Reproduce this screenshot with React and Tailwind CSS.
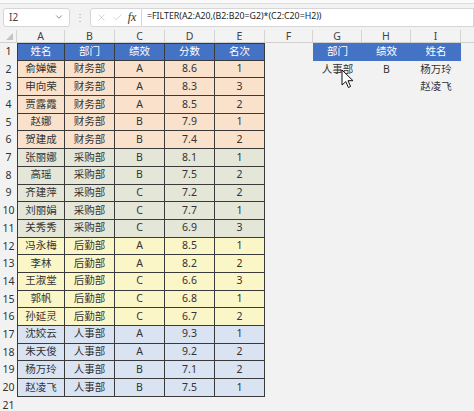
import { X, Check, ChevronDown } from "lucide-react";

const COLS = [
  { key: "A", w: "w-[48px]" },
  { key: "B", w: "w-[50px]" },
  { key: "C", w: "w-[50px]" },
  { key: "D", w: "w-[50px]" },
  { key: "E", w: "w-[50px]" },
  { key: "F", w: "w-[48px]" },
  { key: "G", w: "w-[49px]" },
  { key: "H", w: "w-[49px]" },
  { key: "I", w: "w-[50px]" },
];

const DEPT_BG = {
  财务部: "bg-[#f9e1cc]",
  采购部: "bg-[#e4e6d8]",
  后勤部: "bg-[#fbf6c7]",
  人事部: "bg-[#d9e3f2]",
};

const DATA = [
  ["俞婵媛", "财务部", "A", "8.6", "1"],
  ["申向荣", "财务部", "A", "8.3", "3"],
  ["贾露霞", "财务部", "A", "8.5", "2"],
  ["赵娜", "财务部", "B", "7.9", "1"],
  ["贺建成", "财务部", "B", "7.4", "2"],
  ["张丽娜", "采购部", "B", "8.1", "1"],
  ["高瑶", "采购部", "B", "7.5", "2"],
  ["齐建萍", "采购部", "C", "7.2", "2"],
  ["刘丽娟", "采购部", "C", "7.7", "1"],
  ["关秀秀", "采购部", "C", "6.9", "3"],
  ["冯永梅", "后勤部", "A", "8.5", "1"],
  ["李林", "后勤部", "A", "8.2", "2"],
  ["王淑堂", "后勤部", "C", "6.6", "3"],
  ["郭帆", "后勤部", "C", "6.8", "1"],
  ["孙延灵", "后勤部", "C", "6.7", "2"],
  ["沈姣云", "人事部", "A", "9.3", "1"],
  ["朱天俊", "人事部", "A", "9.2", "2"],
  ["杨万玲", "人事部", "B", "7.1", "2"],
  ["赵凌飞", "人事部", "B", "7.5", "1"],
];

const HEAD = ["姓名", "部门", "绩效", "分数", "名次"];
const SIDE = {
  1: ["部门", "绩效", "姓名"],
  2: ["人事部", "B", "杨万玲"],
  3: ["", "", "赵凌飞"],
};

function Cell({ w, className = "", children }) {
  return (
    <div className={`${w} shrink-0 h-full flex items-center justify-center ${className}`}>{children}</div>
  );
}

function Row({ n }) {
  const rec = n >= 2 && n <= 20 ? DATA[n - 2] : null;
  const side = SIDE[n];
  return (
    <div className="flex h-[17.7px]">
      <div className="w-[17px] shrink-0 flex items-end justify-center pb-[1px] text-[10.5px] text-[#333]">{n}</div>
      {COLS.slice(0, 5).map((c, i) => {
        if (n === 1) {
          return (
            <Cell
              key={c.key}
              w={c.w}
              className={`bg-[#4472c4] text-white border-r border-b border-t border-[#3a3a3a] ${i === 0 ? "border-l" : ""}`}
            >
              {HEAD[i]}
            </Cell>
          );
        }
        if (rec) {
          return (
            <Cell
              key={c.key}
              w={c.w}
              className={`${DEPT_BG[rec[1]]} text-[#333] border-r border-b border-[#3a3a3a] ${i === 0 ? "border-l" : ""}`}
            >
              {rec[i]}
            </Cell>
          );
        }
        return <Cell key={c.key} w={c.w} />;
      })}
      <Cell w={COLS[5].w} />
      {COLS.slice(6).map((c, i) => (
        <Cell
          key={c.key}
          w={c.w}
          className={n === 1 ? "bg-[#4472c4] text-white" : "text-[#333]"}
        >
          {side ? side[i] : ""}
        </Cell>
      ))}
    </div>
  );
}

export default function App() {
  const rows = Array.from({ length: 21 }, (_, i) => i + 1);
  return (
    <div
      className="w-[474px] h-[411px] overflow-hidden bg-[#f2f2f2] relative text-[10.5px]"
      style={{ fontFamily: '"Noto Sans", "Noto Sans CJK SC", sans-serif' }}
    >
      {/* formula bar */}
      <div className="h-[4px] bg-[#fafafa] border-b border-[#dedede]" />
      <div className="h-[26px] flex items-center pl-[3px] gap-[5px]">
        <div className="w-[67px] h-[19px] bg-white border border-[#d6d6d6] rounded-[3px] flex items-center justify-between px-[5px] text-[#444]">
          <span className="text-[10px]">I2</span>
          <ChevronDown size={10} strokeWidth={1.6} className="text-[#555]" />
        </div>
        <div className="text-[#aaa] text-[10px] leading-none">⋮</div>
        <div className="flex items-stretch h-[19px] flex-1">
          <div className="w-[52px] bg-white border border-[#d6d6d6] rounded-l-[3px] flex items-center justify-around px-[2px]">
            <X size={11} strokeWidth={1.2} className="text-[#b5b5b5]" />
            <Check size={11} strokeWidth={1.2} className="text-[#b5b5b5]" />
            <span
              className="italic text-[12px] text-[#333] leading-none"
              style={{ fontFamily: '"Liberation Serif", serif' }}
            >
              fx
            </span>
          </div>
          <div className="flex-1 bg-white border border-l-0 border-[#d6d6d6] flex items-center pl-[5px] text-[8.8px] text-[#222]">
            =FILTER(A2:A20,(B2:B20=G2)*(C2:C20=H2))
          </div>
        </div>
      </div>

      {/* column headers */}
      <div className="flex h-[13px] border-b border-[#cfcfcf] bg-[#f3f3f3] text-[#444] text-[10.5px]">
        <div className="w-[17px] shrink-0 border-r border-[#d4d4d4] flex items-end justify-end pr-[3px] pb-[2px]">
          <svg width="7" height="7" viewBox="0 0 7 7">
            <polygon points="7,0 7,7 0,7" fill="#c4c4c4" />
          </svg>
        </div>
        {COLS.map((c) => (
          <div key={c.key} className={`${c.w} shrink-0 border-r border-[#d4d4d4] flex items-center justify-center leading-none`}>
            {c.key}
          </div>
        ))}
        <div className="flex-1" />
      </div>

      {/* rows */}
      <div>
        {rows.map((n) => (
          <Row key={n} n={n} />
        ))}
      </div>

      {/* mouse pointer */}
      <svg className="absolute left-[341px] top-[69px]" width="13" height="20" viewBox="0 0 13 20">
        <path
          d="M1 1 L1 16 L4.8 12.6 L7.4 18.5 L9.6 17.5 L7 11.7 L12 11.7 Z"
          fill="#fff"
          stroke="#111"
          strokeWidth="1"
          strokeLinejoin="round"
        />
      </svg>
    </div>
  );
}
